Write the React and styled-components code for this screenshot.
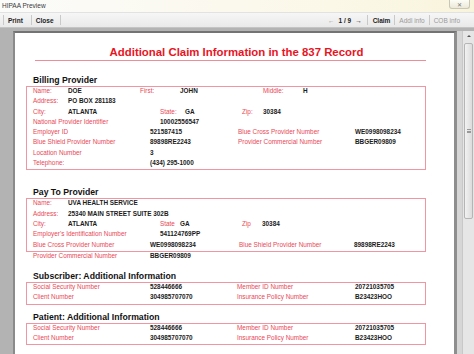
import React from "react";
import styled, { createGlobalStyle } from "styled-components";

const Global = createGlobalStyle`
  html, body { margin: 0; padding: 0; overflow: hidden; background: #fff; }
  * { box-sizing: border-box; }
`;

const Window = styled.div`
  width: 474px;
  height: 354px;
  display: flex;
  flex-direction: column;
  font-family: "Liberation Sans", Arial, sans-serif;
  overflow: hidden;
`;

const TitleBar = styled.div`
  height: 12px;
  flex: none;
  display: flex;
  align-items: flex-start;
  padding-left: 2px;
  background: linear-gradient(to right, #fbfbfa, #fbf8e8 70%, #f8f4dc);
`;

const TitleText = styled.span`
  font-size: 6.5px;
  line-height: 12px;
  color: #3a3a3a;
`;

const CloseTab = styled.div`
  margin-left: auto;
  margin-right: 4px;
  width: 21px;
  height: 9px;
  border: 1px solid #c9c6b4;
  border-top: none;
  border-radius: 0 0 3px 3px;
  background: linear-gradient(#fdfcf6, #ece9d8);
  display: flex;
  align-items: center;
  justify-content: center;
  font-size: 6px;
  color: #777;
`;

const Toolbar = styled.div`
  height: 16px;
  flex: none;
  display: flex;
  align-items: center;
  background: linear-gradient(#f6f6f6, #e9e9e9);
  border-top: 1px solid #e2e2e2;
  border-bottom: 1px solid #c4c4c4;
  padding-left: 3px;
  padding-right: 14px;
`;

const Sep = styled.span`
  width: 1px;
  height: 10px;
  background: #c9c9c9;
  margin: 0 ${(p) => p.$m ?? 4}px;
`;

const ToolText = styled.span`
  font-size: 6.5px;
  font-weight: ${(p) => (p.$bold ? 700 : 400)};
  color: ${(p) => (p.$dim ? "#9a9a9a" : "#222")};
  margin: 0 ${(p) => p.$m ?? 0}px;
  white-space: nowrap;
`;

const Spacer = styled.span`
  flex: 1;
`;

const Workspace = styled.div`
  flex: 1;
  display: flex;
  background: #b3b3b3;
  padding-top: 3px;
  padding-left: 13px;
  min-height: 0;
`;

const Page = styled.div`
  width: 444px;
  flex: none;
  background: #fff;
  border-top: 2px solid #737373;
  border-left: 2px solid #8a8a8a;
  border-right: 3px solid #8e8e8e;
  overflow: hidden;
`;

const SideStrip = styled.div`
  width: 5px;
  flex: none;
  background: #d6d6d6;
`;

const Scrollbar = styled.div`
  width: 12px;
  flex: none;
  display: flex;
  flex-direction: column;
  align-items: center;
  background: #e6e6e6;
  border-left: 1px solid #c8c8c8;
`;

const ScrollArrow = styled.div`
  width: 0;
  height: 0;
  margin-top: 4px;
  border-left: 2px solid transparent;
  border-right: 2px solid transparent;
  border-bottom: 2px solid #555;
`;

const Thumb = styled.div`
  margin-top: 6px;
  width: 9px;
  height: 176px;
  border: 1px solid #b5b5b5;
  border-radius: 2px;
  background: linear-gradient(to right, #f2f2f2, #dcdcdc);
  display: flex;
  align-items: center;
  justify-content: center;
`;

const Grip = styled.div`
  width: 4px;
  height: 4px;
  border-top: 1px solid #999;
  border-bottom: 1px solid #999;
  position: relative;
  &::after {
    content: "";
    position: absolute;
    left: 0;
    right: 0;
    top: 0.5px;
    border-top: 1px solid #999;
  }
`;

const DocTitle = styled.div`
  margin-top: 12px;
  padding-left: 4px;
  text-align: center;
  font-size: 11.4px;
  line-height: 14px;
  font-weight: 700;
  color: #e8141f;
  white-space: nowrap;
`;

const Rule = styled.div`
  margin: 1px 0 0 20px;
  width: 391px;
  height: 1px;
  background: #ee8c9a;
`;

const Section = styled.section`
  margin-top: ${(p) => p.$top}px;
  margin-left: 11px;
  width: 400px;
`;

const Heading = styled.div`
  padding-left: 7px;
  font-size: 8.7px;
  line-height: 11px;
  font-weight: 700;
  color: #111;
  white-space: nowrap;
`;

const Box = styled.div`
  border: 1px solid #ef96a2;
`;

const Row = styled.div`
  height: 10.3px;
  display: flex;
  padding-left: ${(p) => (p.$outside ? 7 : 6)}px;
`;

const Cell = styled.span`
  flex: ${(p) => (p.$w ? "none" : "1")};
  width: ${(p) => (p.$w ? `${p.$w}px` : "auto")};
  font-size: 6.4px;
  line-height: 7px;
  white-space: nowrap;
  font-weight: ${(p) => (p.$v ? 700 : 400)};
  color: ${(p) => (p.$v ? "#1b1b1b" : "#e94856")};
`;

function DataRow({ cells, outside }) {
  return (
    <Row $outside={outside}>
      {cells.map(([x, text, kind], i) => {
        const next = cells[i + 1];
        const w = next ? next[0] - x : 0;
        return (
          <Cell key={i} $w={w} $v={kind === "v"}>
            {text}
          </Cell>
        );
      })}
    </Row>
  );
}

const billing = [
  [[0, "Name:", "l"], [35, "DOE", "v"], [107, "First:", "l"], [147, "JOHN", "v"], [230, "Middle:", "l"], [270, "H", "v"]],
  [[0, "Address:", "l"], [35, "PO BOX 281183", "v"]],
  [[0, "City:", "l"], [35, "ATLANTA", "v"], [127, "State:", "l"], [152, "GA", "v"], [209, "Zip:", "l"], [230, "30384", "v"]],
  [[0, "National Provider Identifier", "l"], [127, "10002556547", "v"]],
  [[0, "Employer ID", "l"], [117, "521587415", "v"], [205, "Blue Cross Provider Number", "l"], [322, "WE0998098234", "v"]],
  [[0, "Blue Shield Provider Number", "l"], [117, "89898RE2243", "v"], [205, "Provider Commercial Number", "l"], [322, "BBGER09809", "v"]],
  [[0, "Location Number", "l"], [117, "3", "v"]],
  [[0, "Telephone:", "l"], [117, "(434) 295-1000", "v"]],
];

const payTo = [
  [[0, "Name:", "l"], [35, "UVA HEALTH SERVICE", "v"]],
  [[0, "Address:", "l"], [35, "25340 MAIN STREET SUITE 302B", "v"]],
  [[0, "City:", "l"], [35, "ATLANTA", "v"], [127, "State", "l"], [147, "GA", "v"], [209, "Zip", "l"], [229, "30384", "v"]],
  [[0, "Employer's Identification Number", "l"], [127, "541124769PP", "v"]],
  [[0, "Blue Cross Provider Number", "l"], [117, "WE0998098234", "v"], [206, "Blue Shield Provider Number", "l"], [321, "89898RE2243", "v"]],
];

const payToExtra = [[0, "Provider Commercial Number", "l"], [117, "BBGER09809", "v"]];

const person = [
  [[0, "Social Security Number", "l"], [117, "528446666", "v"], [204, "Member ID Number", "l"], [322, "20721035705", "v"]],
  [[0, "Client Number", "l"], [117, "304985707070", "v"], [204, "Insurance Policy Number", "l"], [322, "B23423HOO", "v"]],
];

export default function App() {
  return (
    <Window>
      <Global />
      <TitleBar>
        <TitleText>HIPAA Preview</TitleText>
        <CloseTab>✕</CloseTab>
      </TitleBar>
      <Toolbar>
        <Sep $m={0} />
        <ToolText $bold $m={4}>Print</ToolText>
        <Sep $m={4} />
        <ToolText $bold>Close</ToolText>
        <Sep $m={6} />
        <Spacer />
        <ToolText $dim>←</ToolText>
        <ToolText $bold $m={4}>1 / 9</ToolText>
        <ToolText>→</ToolText>
        <Sep $m={5} />
        <ToolText $bold>Claim</ToolText>
        <Sep $m={4} />
        <ToolText $dim>Addl info</ToolText>
        <Sep $m={4} />
        <ToolText $dim>COB info</ToolText>
      </Toolbar>
      <Workspace>
        <Page>
          <DocTitle>Additional Claim Information in the 837 Record</DocTitle>
          <Rule />
          <Section $top={14}>
            <Heading>Billing Provider</Heading>
            <Box>
              {billing.map((r, i) => (
                <DataRow key={i} cells={r} />
              ))}
            </Box>
          </Section>
          <Section $top={17}>
            <Heading>Pay To Provider</Heading>
            <Box>
              {payTo.map((r, i) => (
                <DataRow key={i} cells={r} />
              ))}
            </Box>
            <DataRow outside cells={payToExtra} />
          </Section>
          <Section $top={9}>
            <Heading>Subscriber: Additional Information</Heading>
            <Box>
              {person.map((r, i) => (
                <DataRow key={i} cells={r} />
              ))}
            </Box>
          </Section>
          <Section $top={7}>
            <Heading>Patient: Additional Information</Heading>
            <Box>
              {person.map((r, i) => (
                <DataRow key={i} cells={r} />
              ))}
            </Box>
          </Section>
        </Page>
        <SideStrip />
        <Scrollbar>
          <ScrollArrow />
          <Thumb>
            <Grip />
          </Thumb>
        </Scrollbar>
      </Workspace>
    </Window>
  );
}
